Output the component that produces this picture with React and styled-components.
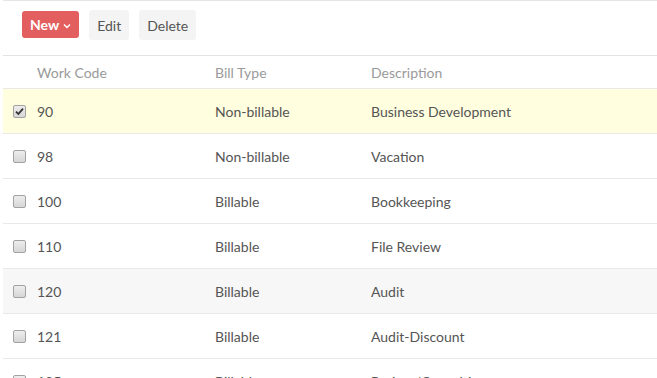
import React from "react";
import styled, { createGlobalStyle } from "styled-components";

const GlobalStyle = createGlobalStyle`
  html, body {
    margin: 0;
    padding: 0;
    background: #fff;
    font-family: Lato, "Open Sans", sans-serif;
    overflow: hidden;
  }
`;

const rows = [
  { code: "90", type: "Non-billable", desc: "Business Development", checked: true },
  { code: "98", type: "Non-billable", desc: "Vacation" },
  { code: "100", type: "Billable", desc: "Bookkeeping" },
  { code: "110", type: "Billable", desc: "File Review" },
  { code: "120", type: "Billable", desc: "Audit", hover: true },
  { code: "121", type: "Billable", desc: "Audit-Discount" },
  { code: "125", type: "Billable", desc: "Project/Consulting" },
];

const Page = styled.div`
  margin-left: 3px;
  border-top: 1px solid #e6e6e6;
`;

const Toolbar = styled.div`
  display: flex;
  align-items: flex-start;
  gap: 10px;
  height: 45px;
  padding: 9px 0 0 19px;
  box-sizing: content-box;
  border-bottom: 1px solid #e3e3e3;
`;

const Button = styled.button`
  display: flex;
  align-items: center;
  gap: 4px;
  height: ${(p) => (p.primary ? "27px" : "30px")};
  margin-top: ${(p) => (p.primary ? "1px" : "0")};
  padding: 0 8px;
  border: none;
  border-radius: 3px;
  font-family: Lato, sans-serif;
  font-size: 14px;
  font-weight: ${(p) => (p.primary ? 700 : 400)};
  color: ${(p) => (p.primary ? "#fff" : "#555")};
  background: ${(p) => (p.primary ? "#e35f5f" : "#f4f4f4")};
`;

const Chevron = styled.svg`
  margin-top: 3px;
`;

const Row = styled.div`
  display: grid;
  grid-template-columns: 34px 178px 156px 1fr;
  align-items: center;
  height: ${(p) => (p.header ? "32px" : "44px")};
  border-bottom: 1px solid #e9e9e9;
  background: ${(p) => (p.selected ? "#fffede" : p.hover ? "#f7f7f7" : "#fff")};
  color: ${(p) => (p.header ? "#9a9a9a" : "#555")};
  font-size: 14px;
`;

const Cell = styled.div`
  white-space: nowrap;
`;

const BoxCell = styled.div`
  display: flex;
  padding-left: 10px;
`;

const Box = styled.span`
  display: flex;
  align-items: center;
  justify-content: center;
  width: 11px;
  height: 11px;
  border: 1px solid #a2a2a2;
  border-radius: 2px;
  background: linear-gradient(#ededed, #d6d6d6);
`;

const Check = ({ checked }) => (
  <Box>
    {checked && (
      <svg width="9" height="9" viewBox="0 0 9 9">
        <path d="M1 4.6 L3.4 7 L8 1.6" fill="none" stroke="#333" strokeWidth="1.8" />
      </svg>
    )}
  </Box>
);

export default function App() {
  return (
    <>
      <GlobalStyle />
      <Page>
        <Toolbar>
          <Button primary>
            New
            <Chevron width="8" height="6" viewBox="0 0 8 6">
              <path d="M1 1.5 L4 4.5 L7 1.5" fill="none" stroke="#fff" strokeWidth="1.4" />
            </Chevron>
          </Button>
          <Button>Edit</Button>
          <Button>Delete</Button>
        </Toolbar>
        <Row header>
          <Cell />
          <Cell>Work Code</Cell>
          <Cell>Bill Type</Cell>
          <Cell>Description</Cell>
        </Row>
        {rows.map((r) => (
          <Row key={r.code} selected={r.checked} hover={r.hover}>
            <BoxCell>
              <Check checked={r.checked} />
            </BoxCell>
            <Cell>{r.code}</Cell>
            <Cell>{r.type}</Cell>
            <Cell>{r.desc}</Cell>
          </Row>
        ))}
      </Page>
    </>
  );
}
